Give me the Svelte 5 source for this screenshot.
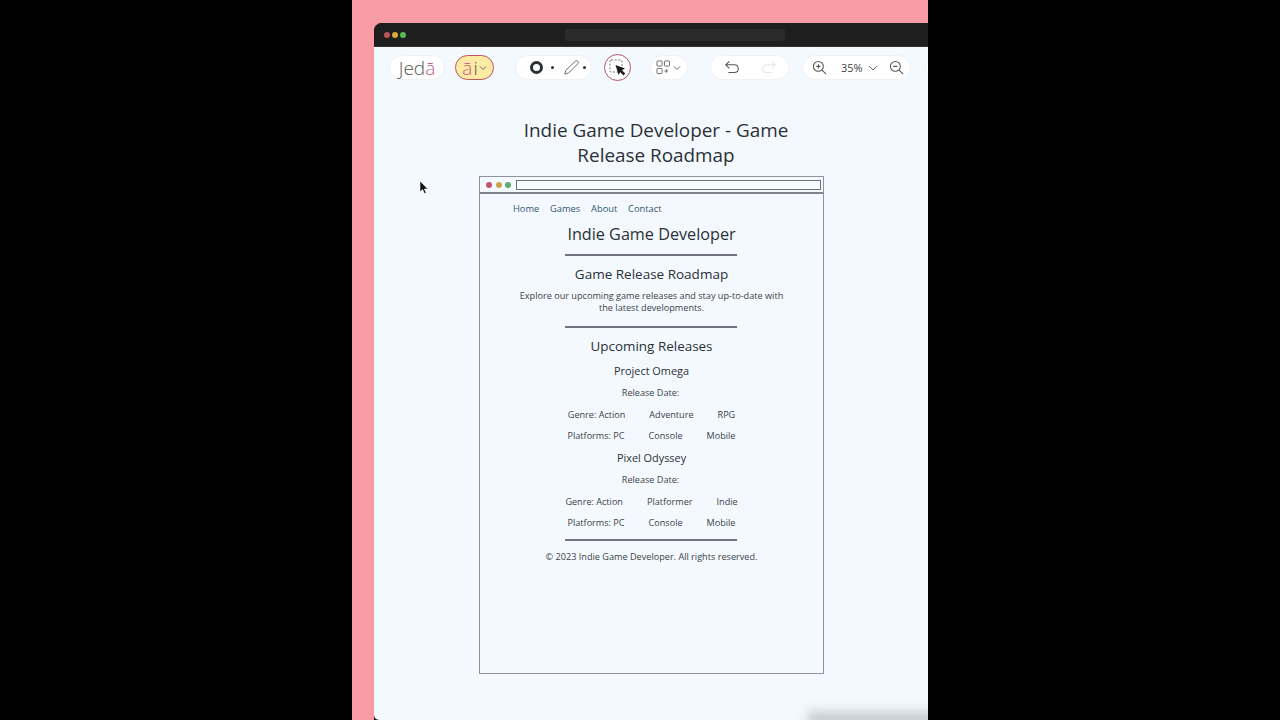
<script lang="ts">
  const nav = ['Home', 'Games', 'About', 'Contact'];

  const releases = [
    {
      title: 'Project Omega',
      genre: ['Genre: Action', 'Adventure', 'RPG'],
      platforms: ['Platforms: PC', 'Console', 'Mobile']
    },
    {
      title: 'Pixel Odyssey',
      genre: ['Genre: Action', 'Platformer', 'Indie'],
      platforms: ['Platforms: PC', 'Console', 'Mobile']
    }
  ];
</script>

<div class="page">
  <div class="stage">
    <div class="window">
      <div class="titlebar">
        <span class="dot red"></span>
        <span class="dot amber"></span>
        <span class="dot green"></span>
        <span class="urlbar"></span>
      </div>

      <div class="app">
        <!-- Toolbar -->
        <div class="toolbar">
          <div class="pill logo">Jed<span class="accent">ā</span></div>
          <div class="pill ai">
            <span class="accent">ā</span>i
            <svg width="8" height="8" viewBox="0 0 8 8" fill="none" stroke="#666" stroke-width="1"><path d="M1 2.5L4 5.5L7 2.5" /></svg>
          </div>
          <div class="pill tools">
            <span class="ring"></span>
            <span class="tiny"></span>
            <svg width="17" height="17" viewBox="0 0 18 18" fill="none" stroke="#666" stroke-width="1" stroke-linejoin="round"><path d="M2 16L3 12L13 2.4C13.8 1.7 15 1.7 15.7 2.4C16.4 3.1 16.4 4.2 15.7 5L6 14.8Z" /></svg>
            <span class="tiny"></span>
          </div>
          <div class="select-btn">
            <svg width="18" height="18" viewBox="0 0 18 18" fill="none">
              <rect x="1" y="1" width="12" height="12" rx="1" stroke="#777" stroke-width="1" stroke-dasharray="2 1.6" />
              <path d="M6.5 6L16 9.5L13 11.2L16.2 14.6L14.4 16.4L11.2 13L9.6 16Z" fill="#1c1c1c" />
            </svg>
          </div>
          <div class="pill grid">
            <svg width="15" height="15" viewBox="0 0 16 16" fill="none" stroke="#666" stroke-width="1">
              <rect x="1" y="1" width="5.5" height="5.5" rx="1" />
              <rect x="9" y="1" width="5.5" height="5.5" rx="1" />
              <rect x="1" y="9" width="5.5" height="5.5" rx="1" />
              <path d="M9 11.7H13M11 9.7V13.7" />
            </svg>
            <svg width="8" height="8" viewBox="0 0 8 8" fill="none" stroke="#666" stroke-width="1"><path d="M1 2.5L4 5.5L7 2.5" /></svg>
          </div>
          <div class="pill history">
            <svg width="16" height="15" viewBox="0 0 18 16" fill="none" stroke="#555" stroke-width="1.2"><path d="M6 1L2 5L6 9M2 5H11.5C14.2 5 16 6.8 16 9.3C16 11.8 14.2 13.6 11.5 13.6H5" /></svg>
            <svg width="16" height="15" viewBox="0 0 18 16" fill="none" stroke="#e2e7eb" stroke-width="1.2"><path d="M12 1L16 5L12 9M16 5H6.5C3.8 5 2 6.8 2 9.3C2 11.8 3.8 13.6 6.5 13.6H13" /></svg>
          </div>
          <div class="pill zoom">
            <svg width="15" height="15" viewBox="0 0 16 16" fill="none" stroke="#555" stroke-width="1.1"><circle cx="6.8" cy="6.8" r="5.3" /><path d="M10.8 10.8L15 15M4.6 6.8H9M6.8 4.6V9" /></svg>
            <span class="percent">35%</span>
            <svg class="caret" width="10" height="8" viewBox="0 0 10 8" fill="none" stroke="#666" stroke-width="1"><path d="M1 2L5 6L9 2" /></svg>
            <svg width="15" height="15" viewBox="0 0 16 16" fill="none" stroke="#555" stroke-width="1.1"><circle cx="6.8" cy="6.8" r="5.3" /><path d="M10.8 10.8L15 15M4.6 6.8H9" /></svg>
          </div>
          <div class="pill stub"></div>
        </div>

        <!-- Canvas -->
        <h1 class="board-title">Indie Game Developer - Game<br />Release Roadmap</h1>

        <div class="mock">
          <div class="mock-bar">
            <span class="mdot mred"></span>
            <span class="mdot mamber"></span>
            <span class="mdot mgreen"></span>
            <span class="mock-url"></span>
          </div>

          <nav class="mock-nav">
            {#each nav as item}
              <span>{item}</span>
            {/each}
          </nav>

          <div class="mock-body">
            <h2 class="site-title">Indie Game Developer</h2>
            <hr />
            <h3 class="section-title">Game Release Roadmap</h3>
            <p class="intro">Explore our upcoming game releases and stay up-to-date with<br />the latest developments.</p>
            <hr class="second" />
            <h3 class="upcoming">Upcoming Releases</h3>

            {#each releases as release}
              <h4 class="game">{release.title}</h4>
              <p class="line date">Release Date:</p>
              <p class="line">
                {#each release.genre as g}<span>{g}</span>{/each}
              </p>
              <p class="line">
                {#each release.platforms as p}<span>{p}</span>{/each}
              </p>
            {/each}

            <hr class="third" />
            <p class="copy">© 2023 Indie Game Developer. All rights reserved.</p>
          </div>
        </div>

        <svg class="cursor" width="10" height="15" viewBox="0 0 10 15"><path d="M1 1V12L3.6 9.6L5.4 13.6L7.2 12.8L5.4 9H8.8Z" fill="#111" stroke="#fff" stroke-width="0.6" /></svg>
        <div class="shade"></div>
      </div>
    </div>
  </div>
</div>

<style>
  :global(body) {
    margin: 0;
    background: #000;
  }

  .page {
    width: 1280px;
    height: 720px;
    display: flex;
    justify-content: center;
    overflow: hidden;
    background: #000;
    font-family: "Open Sans", "Noto Sans", sans-serif;
    color: #2b3036;
  }

  .stage {
    width: 576px;
    height: 720px;
    box-sizing: border-box;
    padding: 23px 0 0 22px;
    background: #f99ca5;
    overflow: hidden;
  }

  .window {
    width: 600px;
    height: 697px;
    display: flex;
    flex-direction: column;
    border-radius: 8px 0 0 0;
    overflow: hidden;
    background: #111;
  }

  .titlebar {
    height: 24px;
    flex: none;
    display: flex;
    align-items: center;
    gap: 2px;
    padding-left: 10px;
    background: #1e1e1e;
    border-bottom: 1px solid #333;
    box-sizing: border-box;
  }

  .dot {
    width: 6px;
    height: 6px;
    border-radius: 50%;
  }
  .red { background: #b9565c; }
  .amber { background: #dda63f; }
  .green { background: #58b84d; }

  .urlbar {
    width: 220px;
    height: 12px;
    margin-left: 157px;
    border-radius: 2px;
    background: #2a2a2a;
  }

  .app {
    flex: 1;
    position: relative;
    overflow: hidden;
    border-radius: 0 0 0 5px;
    background: #f3f9fe;
  }

  .toolbar {
    display: flex;
    align-items: center;
    height: 25px;
    margin: 8px 0 0 15px;
  }

  .pill {
    height: 25px;
    flex: none;
    display: flex;
    align-items: center;
    box-sizing: border-box;
    border-radius: 13px;
    background: #fff;
    border: 1px solid #eef2f5;
  }

  .logo {
    width: 56px;
    justify-content: center;
    font-size: 19px;
    font-weight: 300;
    color: #555;
  }

  .accent { color: #c4608c; }

  .ai {
    width: 39px;
    margin-left: 10px;
    justify-content: center;
    gap: 1px;
    font-size: 19px;
    font-weight: 300;
    color: #555;
    background: #fdeba3;
    border: 1.5px solid #bd5560;
  }

  .tools {
    width: 77px;
    margin-left: 21px;
    padding-left: 14px;
  }

  .ring {
    width: 13px;
    height: 13px;
    box-sizing: border-box;
    border: 3px solid #2b3036;
    border-radius: 50%;
  }

  .tiny {
    width: 3px;
    height: 3px;
    margin: 0 9px 0 8px;
    border-radius: 50%;
    background: #333;
  }

  .tools svg + .tiny { margin: 0 0 0 3px; }
  .tools .tiny:first-of-type + svg { margin-left: -6px; }

  .select-btn {
    width: 27px;
    height: 27px;
    flex: none;
    margin-left: 12px;
    display: flex;
    align-items: center;
    justify-content: center;
    box-sizing: border-box;
    border-radius: 50%;
    background: #fff;
    border: 1.5px solid #b34f73;
  }

  .grid {
    width: 38px;
    margin-left: 19px;
    padding-left: 5px;
    gap: 2px;
  }

  .history {
    width: 79px;
    margin-left: 22px;
    padding-left: 13px;
    gap: 21px;
  }

  .zoom {
    width: 109px;
    margin-left: 13px;
    padding-left: 9px;
  }

  .percent {
    margin-left: 14px;
    font-size: 11px;
    color: #444;
  }

  .caret { margin-left: 5px; }
  .caret + svg { margin-left: 11px; }

  .stub {
    width: 40px;
    margin-left: 14px;
  }

  .board-title {
    width: 300px;
    margin: 38px 0 0 132px;
    font-size: 18.9px;
    line-height: 25px;
    font-weight: 400;
    text-align: center;
  }

  .mock {
    width: 345px;
    height: 498px;
    margin: 8px 0 0 105px;
    box-sizing: border-box;
    border: 1px solid #8d949b;
  }

  .mock-bar {
    height: 15px;
    display: flex;
    align-items: center;
    gap: 3.5px;
    padding-left: 6px;
    box-sizing: content-box;
    border-bottom: 2px solid #7d848b;
  }

  .mdot {
    width: 6px;
    height: 6px;
    border-radius: 50%;
  }
  .mred { background: #c2566e; }
  .mamber { background: #cda24a; }
  .mgreen { background: #5fa872; }

  .mock-url {
    width: 305px;
    height: 10px;
    margin-left: 1.5px;
    box-sizing: border-box;
    border: 1px solid #6b7178;
    background: #f7fbff;
  }

  .mock-nav {
    display: flex;
    gap: 10.8px;
    margin: 8px 0 0 33px;
    font-size: 9.3px;
    line-height: 14px;
    color: #34566f;
  }

  .mock-body {
    display: flex;
    flex-direction: column;
    align-items: center;
  }

  .site-title {
    margin: 6px 0 0;
    font-size: 16.2px;
    line-height: 24px;
    font-weight: 400;
  }

  hr {
    width: 172px;
    height: 2px;
    margin: 8px 0 0 -2px;
    border: 0;
    background: #6f757c;
  }

  .section-title {
    margin: 9px 0 0;
    font-size: 13.5px;
    line-height: 18px;
    font-weight: 400;
  }

  .intro {
    margin: 7px 0 0;
    font-size: 9.15px;
    line-height: 12px;
    text-align: center;
    color: #3d4248;
  }

  hr.second { margin-top: 12px; }

  .upcoming {
    margin: 8px 0 0;
    font-size: 13.45px;
    line-height: 20px;
    font-weight: 400;
  }

  .game {
    margin: 6.5px 0 0;
    font-size: 10.9px;
    line-height: 16px;
    font-weight: 400;
  }

  .line {
    display: flex;
    gap: 24px;
    margin: 7.8px 0 0;
    font-size: 9.1px;
    line-height: 13.7px;
    color: #3d4248;
  }

  .game + .line { margin-top: 7.5px; }
  .line + .game { margin-top: 7px; }
  .date { padding-right: 2px; }

  hr.third { margin-top: 9px; }

  .copy {
    margin: 9px 0 0;
    font-size: 9.15px;
    line-height: 13px;
    color: #3d4248;
  }

  .cursor {
    position: absolute;
    left: 45px;
    top: 133px;
  }

  .shade {
    position: absolute;
    right: 16px;
    bottom: -8px;
    width: 150px;
    height: 16px;
    background: #c4c8cc;
    filter: blur(6px);
  }
</style>
